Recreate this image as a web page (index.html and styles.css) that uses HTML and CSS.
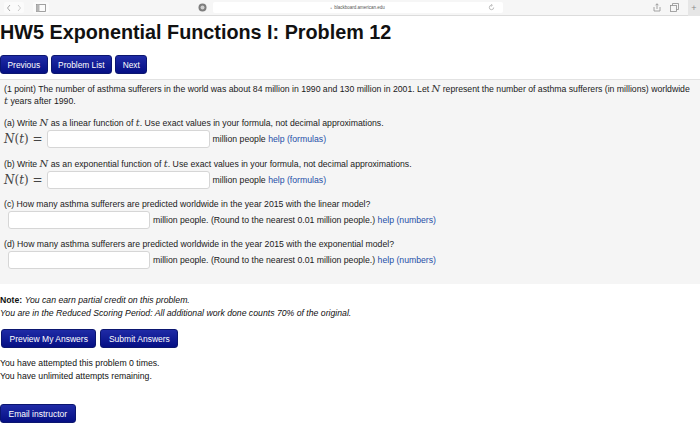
FILE: index.html
```html
<!DOCTYPE html>
<html>
<head>
<meta charset="utf-8">
<link rel="stylesheet" href="styles.css">
</head>
<body>
<div class="toolbar">
  <div class="tb-left">
    <div class="tb-seg">
      <svg width="20" height="10" viewBox="0 0 20 10"><path d="M6 2 L3.5 5 L6 8" fill="none" stroke="#9a9a9a" stroke-width="0.9"/><path d="M14 2 L16.5 5 L14 8" fill="none" stroke="#c4c4c4" stroke-width="0.9"/></svg>
    </div>
    <div class="tb-btn">
      <svg width="10" height="8" viewBox="0 0 10 8"><rect x="0.5" y="0.5" width="9" height="7" fill="none" stroke="#8a8a8a" stroke-width="0.8"/><rect x="0.5" y="0.5" width="3" height="7" fill="#b5b5b5"/></svg>
    </div>
  </div>
  <div class="tb-center">
    <svg class="shield" width="9" height="9" viewBox="0 0 9 9"><circle cx="4.5" cy="4.5" r="4" fill="#7d7d7d"/><circle cx="4.5" cy="4.5" r="2" fill="#d0d0d0"/></svg>
    <div class="address">
      <span class="lock">&#9679;</span><span class="url">blackboard.american.edu</span>
      <svg class="reload" width="7" height="7" viewBox="0 0 8 8"><path d="M6.5 4 A2.5 2.5 0 1 1 4 1.5" fill="none" stroke="#a0a0a0" stroke-width="0.8"/><path d="M3.5 0.3 L5 1.5 L3.5 2.7" fill="none" stroke="#a0a0a0" stroke-width="0.8"/></svg>
    </div>
  </div>
  <div class="tb-right">
    <svg width="8" height="9" viewBox="0 0 8 9"><path d="M1 4 V8 H7 V4" fill="none" stroke="#8f8f8f" stroke-width="0.8"/><path d="M4 6 V0.8 M2.5 2.3 L4 0.8 L5.5 2.3" fill="none" stroke="#8f8f8f" stroke-width="0.8"/></svg>
    <svg width="9" height="9" viewBox="0 0 9 9"><rect x="0.5" y="2.5" width="6" height="6" fill="none" stroke="#8f8f8f" stroke-width="0.8"/><path d="M2.5 2.5 V0.5 H8.5 V6.5 H6.5" fill="none" stroke="#8f8f8f" stroke-width="0.8"/></svg>
    <div class="tb-plus">+</div>
  </div>
</div>

<div class="page">
  <h1 class="title">HW5 Exponential Functions I: Problem 12</h1>
  <div class="nav">
    <span class="btn">Previous</span>
    <span class="btn">Problem List</span>
    <span class="btn">Next</span>
  </div>

  <div class="problem">
    <p class="intro">(1 point) The number of asthma sufferers in the world was about 84 million in 1990 and 130 million in 2001. Let <i class="m">N</i> represent the number of asthma sufferers (in millions) worldwide<br><i class="m">t</i> years after 1990.</p>

    <div class="part">
      <div class="q">(a) Write <i class="m">N</i> as a linear function of <i class="m">t</i>. Use exact values in your formula, not decimal approximations.</div>
      <div class="row">
        <span class="lhs">N</span><span class="lhs-r">(</span><span class="lhs">t</span><span class="lhs-r">) =</span>
        <span class="input wide"></span>
        <span class="after">million people <span class="link">help (formulas)</span></span>
      </div>
    </div>

    <div class="part">
      <div class="q">(b) Write <i class="m">N</i> as an exponential function of <i class="m">t</i>. Use exact values in your formula, not decimal approximations.</div>
      <div class="row">
        <span class="lhs">N</span><span class="lhs-r">(</span><span class="lhs">t</span><span class="lhs-r">) =</span>
        <span class="input wide"></span>
        <span class="after">million people <span class="link">help (formulas)</span></span>
      </div>
    </div>

    <div class="part">
      <div class="q">(c) How many asthma sufferers are predicted worldwide in the year 2015 with the linear model?</div>
      <div class="row">
        <span class="input num"></span>
        <span class="after">million people. (Round to the nearest 0.01 million people.) <span class="link">help (numbers)</span></span>
      </div>
    </div>

    <div class="part">
      <div class="q">(d) How many asthma sufferers are predicted worldwide in the year 2015 with the exponential model?</div>
      <div class="row">
        <span class="input num"></span>
        <span class="after">million people. (Round to the nearest 0.01 million people.) <span class="link">help (numbers)</span></span>
      </div>
    </div>
  </div>

  <div class="notes">
    <p><b>Note:</b> <i>You can earn partial credit on this problem.</i></p>
    <p><i>You are in the Reduced Scoring Period: All additional work done counts 70% of the original.</i></p>
  </div>

  <div class="actions">
    <span class="btn big">Preview My Answers</span>
    <span class="btn big">Submit Answers</span>
  </div>

  <div class="attempts">
    <p>You have attempted this problem 0 times.</p>
    <p>You have unlimited attempts remaining.</p>
  </div>

  <div class="email">
    <span class="btn big">Email instructor</span>
  </div>
</div>
</body>
</html>
```

FILE: styles.css
```css
* { box-sizing: border-box; }
html, body { margin: 0; padding: 0; background: #ffffff; }
body {
  font-family: "Liberation Sans", Arial, Helvetica, sans-serif;
  color: #1a1a1a;
  width: 700px;
  height: 438px;
  overflow: hidden;
}
p { margin: 0; }

.toolbar {
  height: 16px;
  background: #f6f6f6;
  border-bottom: 1px solid #dcdcdc;
  display: flex;
  align-items: center;
  justify-content: space-between;
  padding: 0 4px 0 4px;
}
.tb-left { display: flex; align-items: center; gap: 5px; width: 190px; }
.tb-seg, .tb-btn {
  height: 11px;
  background: #fbfbfb;
  border-radius: 2px;
  display: flex; align-items: center; justify-content: center;
}
.tb-seg { width: 20px; }
.tb-btn { width: 16px; margin-left: 4px; }
.tb-center { display: flex; align-items: center; gap: 6px; }
.shield { display: block; }
.address {
  width: 290px;
  height: 11px;
  background: #ffffff;
  border-radius: 2px;
  display: flex; align-items: center; justify-content: center;
  position: relative;
  font-size: 4.5px;
  color: #555;
}
.lock { font-size: 3px; color: #999; margin-right: 2px; }
.reload { position: absolute; right: 8px; top: 2px; }
.tb-right { display: flex; align-items: center; gap: 9px; width: 190px; justify-content: flex-end; }
.tb-plus {
  width: 12px; height: 16px;
  background: #e6e6e6;
  color: #8a8a8a;
  font-size: 9px;
  line-height: 16px;
  text-align: center;
  margin-right: -4px;
}

.page { padding: 0; }
.title {
  font-size: 19.8px;
  line-height: 26px;
  font-weight: bold;
  margin: 3px 0 0 0;
  color: #111;
}
.nav {
  display: flex;
  gap: 3px;
  margin-top: 10px;
  padding-bottom: 5px;
  border-bottom: 1px solid #e2e2e2;
}
.btn {
  display: inline-block;
  height: 19px;
  line-height: 19px;
  padding: 0 6.5px;
  color: #ffffff;
  font-size: 8.4px;
  background: linear-gradient(#1f2ba6, #050f84);
  border: 1px solid #0b1670;
  border-radius: 3px;
}
.btn.big { font-size: 8.5px; padding: 0 7.5px; }

.problem {
  background: #f5f5f5;
  padding: 3px 4px 5px 4px;
  font-size: 8.7px;
  color: #1a1a1a;
}
.intro { line-height: 12px; margin-bottom: 10px; }
.m {
  font-family: "DejaVu Serif", "Liberation Serif", serif;
  font-style: italic;
  font-size: 10px;
  color: #333;
}
.part { margin-bottom: 10px; }
.q { line-height: 11px; }
.row {
  display: flex;
  align-items: center;
  height: 18px;
  margin-top: 1px;
}
.lhs {
  font-family: "DejaVu Serif", "Liberation Serif", serif;
  font-style: italic;
  font-size: 12px;
  line-height: 14px;
  color: #444;
}
.lhs-r {
  font-family: "DejaVu Serif", "Liberation Serif", serif;
  font-size: 12px;
  line-height: 14px;
  color: #444;
  white-space: pre;
}
.input {
  display: inline-block;
  height: 18px;
  background: #ffffff;
  border: 1px solid #d6d6d6;
  border-radius: 3px;
}
.input.wide { width: 163px; margin-left: 4px; }
.input.num { width: 142px; margin-left: 4px; }
.after { margin-left: 3px; }
.link { color: #1d4fa8; }

.notes {
  font-size: 8.7px;
  line-height: 13px;
  margin-top: 10px;
  color: #111;
}
.actions {
  display: flex;
  gap: 4px;
  margin-top: 9px;
  padding-left: 1px;
}
.attempts {
  font-size: 8.7px;
  line-height: 13px;
  margin-top: 9px;
  color: #111;
}
.email { margin-top: 20px; }
```
